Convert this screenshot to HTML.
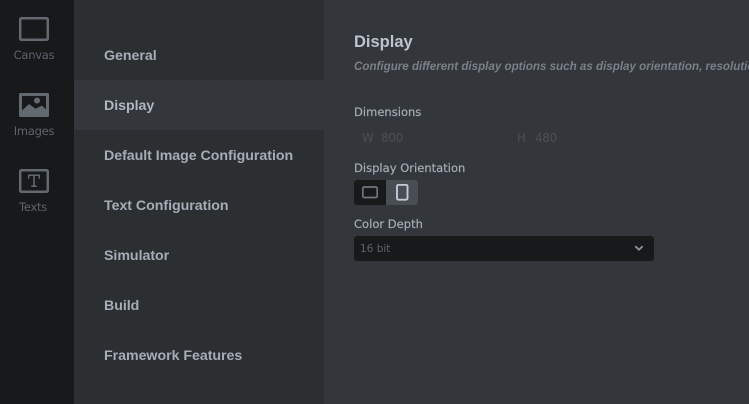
<!DOCTYPE html>
<html><head><meta charset="utf-8">
<style>
html,body{margin:0;padding:0;width:749px;height:404px;overflow:hidden;background:#33363b}
body{position:relative;font-family:"DejaVu Sans","Liberation Sans",sans-serif}
div,svg{position:absolute}
.t{white-space:nowrap;line-height:20px}
.side{text-align:center;left:-4px;width:76px;font-size:11.5px;color:#5d636b;letter-spacing:-.25px}
.nav{left:104px;font-size:14.2px;color:#a5adb7;font-family:"Liberation Sans",sans-serif;font-weight:bold;letter-spacing:-.03px}
.lab{left:354px;font-size:11.5px;color:#a5adb7;letter-spacing:.02px;-webkit-text-stroke:.2px #a5adb7}
.ph{font-size:12px;color:#4b4f56;letter-spacing:-.35px}
</style></head><body>
<div style="left:0;top:0;width:74px;height:404px;background:#17191b"></div>
<div style="left:74px;top:0;width:250px;height:404px;background:#2c2f32"></div>
<div style="left:74px;top:80px;width:250px;height:50px;background:#33363b"></div>

<svg style="left:19px;top:17px" width="30" height="24" viewBox="0 0 30 24"><rect x="1.200" y="1.200" width="27.600" height="21.600" rx="1.500" fill="none" stroke="#626971" stroke-width="2.500"/></svg>
<div class="t side" style="top:45px">Canvas</div>
<svg style="left:19px;top:93px" width="30" height="24" viewBox="0 0 30 24"><path d="M1.500 0h27A1.500 1.500 0 0 1 30 1.500v21a1.500 1.500 0 0 1-1.500 1.500h-27A1.500 1.500 0 0 1 0 22.500v-21A1.500 1.500 0 0 1 1.500 0z" fill="#626971"/><path d="M3 17.500 10 11 16.500 15.800 23 12.500 27 16.500V3H3z" fill="#17191b"/><circle cx="18" cy="7.500" r="3" fill="#626971"/></svg>
<div class="t side" style="top:121px">Images</div>
<svg style="left:19px;top:169px" width="30" height="24" viewBox="0 0 30 24"><rect x="1.200" y="1.200" width="27.600" height="21.600" rx="1.500" fill="none" stroke="#626971" stroke-width="2.500"/><path d="M9 5.500h12v4.300h-1.400V7h-3.800v9.500h2V18h-5.600v-1.500h2V7h-3.800v2.800H9z" fill="#626971"/></svg>
<div class="t side" style="top:197px;left:-5px">Texts</div>

<div class="t nav" style="top:46px">General</div>
<div class="t nav" style="top:96px;color:#b0b8c2">Display</div>
<div class="t nav" style="top:146px">Default Image Configuration</div>
<div class="t nav" style="top:196px">Text Configuration</div>
<div class="t nav" style="top:246px">Simulator</div>
<div class="t nav" style="top:296px">Build</div>
<div class="t nav" style="top:346px">Framework Features</div>

<div class="t" style="left:354px;top:32px;font-family:'Liberation Sans',sans-serif;font-size:16.500px;font-weight:bold;color:#bcc4ce">Display</div>
<div style="left:354px;top:57px;width:395px;height:20px;overflow:hidden"><div class="t" style="left:0;top:0;font-family:'Liberation Sans',sans-serif;font-size:11.600px;font-weight:bold;font-style:italic;color:#7b8088">Configure different display options such as display orientation, resolution and color depth</div></div>
<div class="t lab" style="top:102px">Dimensions</div>
<div class="t ph" style="left:362px;top:128px">W</div>
<div class="t ph" style="left:381px;top:128px">800</div>
<div class="t ph" style="left:517px;top:128px">H</div>
<div class="t ph" style="left:535px;top:128px">480</div>
<div class="t lab" style="top:158px">Display Orientation</div>

<div style="left:354px;top:180px;width:32px;height:25px;background:#17191b;border-radius:3px 0 0 3px"></div>
<div style="left:386px;top:180px;width:32px;height:25px;background:#494d54;border-radius:0 3px 3px 0"></div>
<svg style="left:362px;top:186px" width="16" height="13" viewBox="0 0 16 13"><rect x=".8" y="1" width="14.400" height="10.500" rx="1.500" fill="none" stroke="#6f767e" stroke-width="1.700"/></svg>
<svg style="left:396px;top:184px" width="13" height="17" viewBox="0 0 13 17"><rect x="1" y=".8" width="10.500" height="14.900" rx="1.500" fill="none" stroke="#c3cbd4" stroke-width="1.900"/></svg>

<div class="t lab" style="top:214px">Color Depth</div>
<div style="left:354px;top:236px;width:300px;height:25px;background:#17191b;border-radius:3px"></div>
<div class="t" style="left:360px;top:239px;font-size:10.500px;color:#5f646b">16 bit</div>
<svg style="left:634px;top:245px" width="10" height="7" viewBox="0 0 10 7"><path d="M1.300 1.200 5 4.800 8.700 1.200" fill="none" stroke="#8b929a" stroke-width="1.800"/></svg>
</body></html>
